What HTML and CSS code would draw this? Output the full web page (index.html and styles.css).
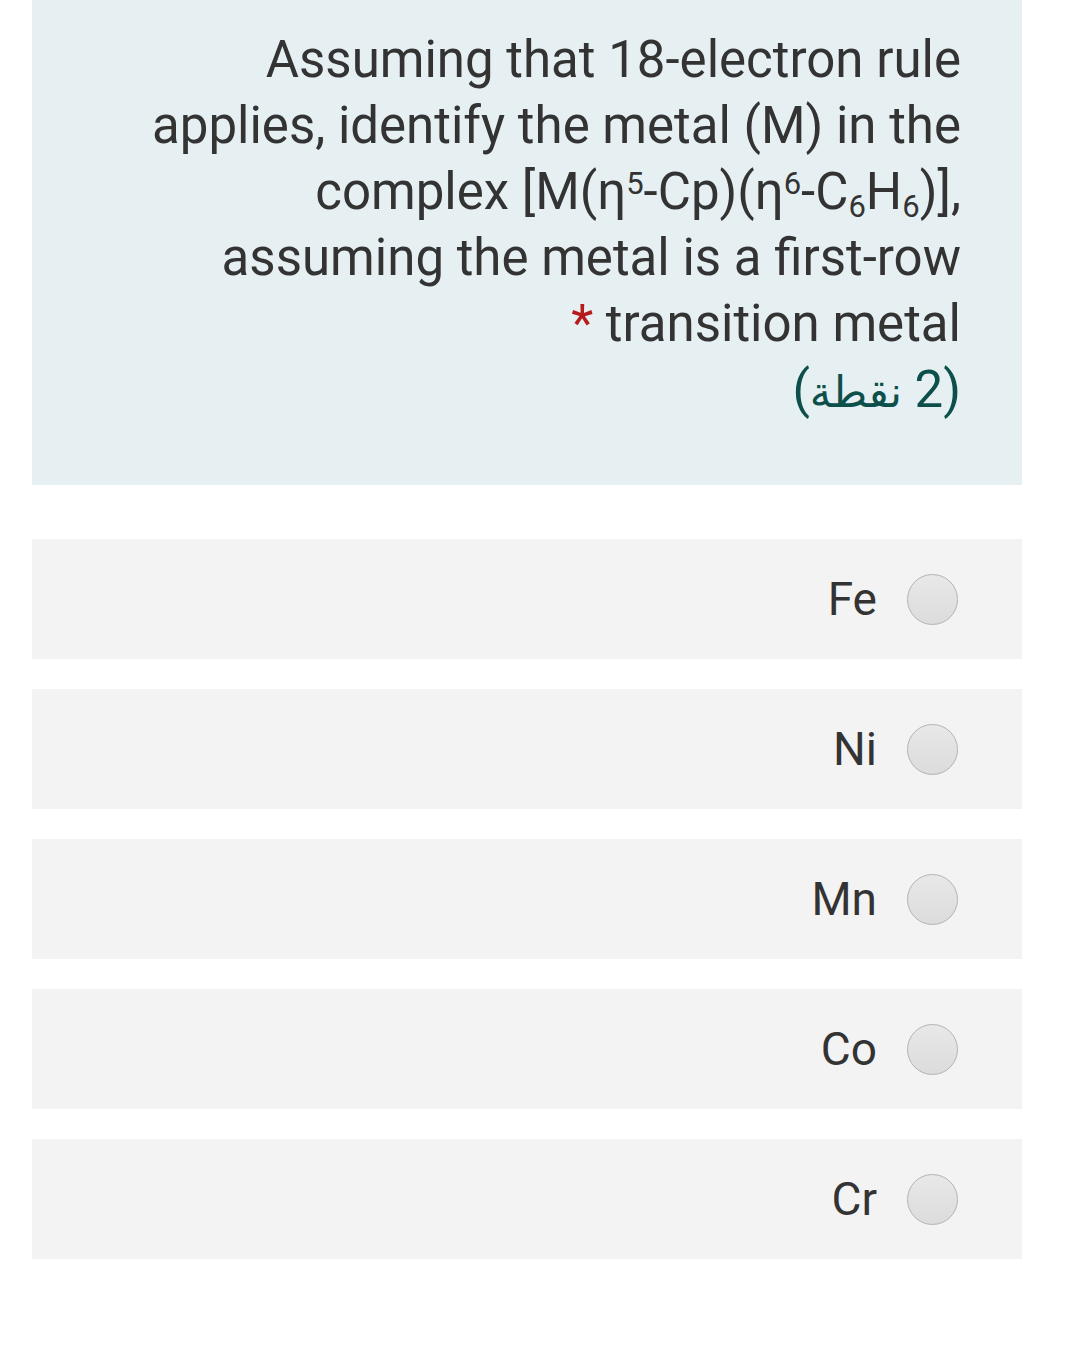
FILE: index.html
```html
<!DOCTYPE html>
<html lang="en">
<head>
<meta charset="utf-8">
<title>Question</title>
<link rel="stylesheet" href="styles.css">
</head>
<body>
<div class="page">
  <div class="question">
    <div class="qtext">
      <span class="ln">Assuming that 18-electron rule</span>
      <span class="ln">applies, identify the metal (M) in the</span>
      <span class="ln">complex [M(η<sup>5</sup>-Cp)(η<sup>6</sup>-C<sub>6</sub>H<sub>6</sub>)],</span>
      <span class="ln">assuming the metal is a first-row</span>
      <span class="ln"><span class="req">*</span> transition metal</span>
    </div>
    <div class="points" dir="rtl">(2 <span class="ar">نقطة</span>)</div>
  </div>
  <div class="options">
    <div class="option"><span class="label">Fe</span><span class="radio"></span></div>
    <div class="option"><span class="label">Ni</span><span class="radio"></span></div>
    <div class="option"><span class="label">Mn</span><span class="radio"></span></div>
    <div class="option"><span class="label">Co</span><span class="radio"></span></div>
    <div class="option"><span class="label">Cr</span><span class="radio"></span></div>
  </div>
</div>
</body>
</html>
```
FILE: styles.css
```css
html, body {
  margin: 0;
  padding: 0;
  background: #ffffff;
}
body {
  font-family: Roboto, "Noto Sans", "DejaVu Sans", sans-serif;
  color: #333333;
}
.page {
  width: 990px;
  margin-left: 32px;
}
.question {
  background: #e6eff2;
  padding: 27px 61px 0 40px;
  text-align: right;
  height: 458px;
}
.qtext {
  font-size: 51px;
  line-height: 66px;
}
.ln {
  display: block;
  white-space: nowrap;
}
.qtext sup {
  font-size: 31px;
  line-height: 0;
  vertical-align: 15px;
}
.qtext sub {
  font-size: 31px;
  line-height: 0;
  vertical-align: -8px;
}
.req {
  color: #b71c1c;
}
.points {
  font-size: 51px;
  line-height: 66px;
  color: #0d4f4a;
}
.ar {
  font-size: 43px;
}
.options {
  margin-top: 54px;
  display: flex;
  flex-direction: column;
  gap: 30px;
}
.option {
  background: #f3f3f3;
  height: 120px;
  display: flex;
  align-items: center;
  justify-content: flex-end;
  padding-right: 64px;
  gap: 30px;
}
.label {
  font-size: 46px;
  color: #333333;
}
.radio {
  width: 49px;
  height: 49px;
  border-radius: 50%;
  border: 1.5px solid #b3b3b3;
  background: linear-gradient(#e8e8e8, #dcdcdc);
  box-sizing: content-box;
}
```
